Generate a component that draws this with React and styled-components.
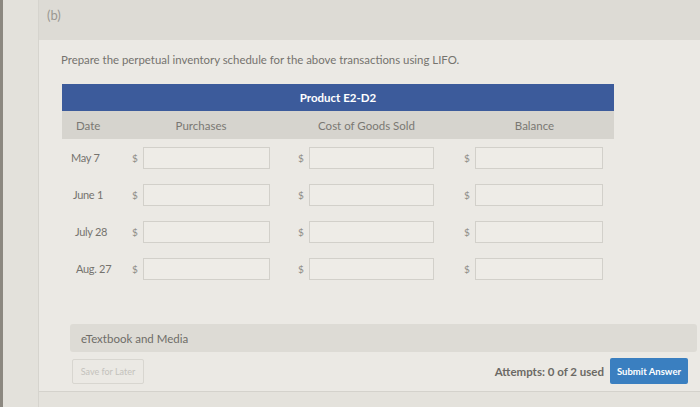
import React from "react";
import styled, { createGlobalStyle } from "styled-components";

const GlobalStyle = createGlobalStyle`
  html, body {
    margin: 0;
    padding: 0;
    background: #e4e2dc;
    font-family: Lato, "Open Sans", sans-serif;
  }
`;

const rows = [
  { date: "May 7", indent: 9 },
  { date: "June 1", indent: 11 },
  { date: "July 28", indent: 13 },
  { date: "Aug. 27", indent: 14 },
];

const App = () => {
  return (
    <>
      <GlobalStyle />
      <Page>
        <SideStrip />
        <Main>
          <PartHeader>(b)</PartHeader>
          <Card>
            <Prompt>
              Prepare the perpetual inventory schedule for the above
              transactions using LIFO.
            </Prompt>
            <Table>
              <TitleBar>Product E2-D2</TitleBar>
              <ColumnRow>
                <ColumnLabel $align="left">Date</ColumnLabel>
                <ColumnLabel>Purchases</ColumnLabel>
                <ColumnLabel $shift={16}>Cost of Goods Sold</ColumnLabel>
                <ColumnLabel $shift={14}>Balance</ColumnLabel>
              </ColumnRow>
              {rows.map((row) => (
                <EntryRow key={row.date}>
                  <DateCell $indent={row.indent}>{row.date}</DateCell>
                  <MoneyCell $pad={6}>
                    <Dollar>$</Dollar>
                    <Field $w={127} />
                  </MoneyCell>
                  <MoneyCell $pad={22}>
                    <Dollar>$</Dollar>
                    <Field $w={125} />
                  </MoneyCell>
                  <MoneyCell $pad={23}>
                    <Dollar>$</Dollar>
                    <Field $w={128} />
                  </MoneyCell>
                </EntryRow>
              ))}
            </Table>
            <MediaBar>eTextbook and Media</MediaBar>
            <Footer>
              <SaveButton>Save for Later</SaveButton>
              <FooterRight>
                <Attempts>Attempts: 0 of 2 used</Attempts>
                <SubmitButton>Submit Answer</SubmitButton>
              </FooterRight>
            </Footer>
          </Card>
        </Main>
      </Page>
    </>
  );
};

const Page = styled.div`
  display: flex;
  width: 700px;
  height: 407px;
  overflow: hidden;
  background: #e4e2dc;
`;

const SideStrip = styled.div`
  width: 35px;
  flex-shrink: 0;
  border-left: 3px solid #8c8880;
  background: #e3e1db;
  border-right: 1px solid #d6d4ce;
`;

const Main = styled.div`
  flex: 1;
  display: flex;
  flex-direction: column;
`;

const PartHeader = styled.div`
  height: 40px;
  box-sizing: border-box;
  padding: 7px 0 0 8px;
  background: #dddbd5;
  color: #9a9892;
  font-size: 13px;
`;

const Card = styled.div`
  height: 352px;
  box-sizing: border-box;
  background: #ebe9e4;
  border-bottom: 1px solid #d4d2cc;
  padding: 13px 0 0 22px;
`;

const Prompt = styled.div`
  font-size: 11.4px;
  color: #75736e;
  height: 31px;
`;

const Table = styled.div`
  width: 552px;
  margin-left: 1px;
`;

const TitleBar = styled.div`
  height: 27px;
  background: #3c5b9b;
  color: #ffffff;
  font-weight: 700;
  font-size: 11.5px;
  display: flex;
  align-items: center;
  justify-content: center;
`;

const grid = `
  display: grid;
  grid-template-columns: 64px 150px 165px 173px;
`;

const ColumnRow = styled.div`
  ${grid}
  height: 28px;
  background: #d6d4ce;
  align-items: center;
`;

const ColumnLabel = styled.div`
  font-size: 11.5px;
  color: #7a7873;
  text-align: ${(p) => p.$align || "center"};
  padding-left: ${(p) => (p.$align === "left" ? 14 : p.$shift || 0)}px;
`;

const EntryRow = styled.div`
  ${grid}
  height: 37px;
  align-items: center;
`;

const DateCell = styled.div`
  font-size: 11px;
  color: #75736e;
  padding-left: ${(p) => p.$indent}px;
  letter-spacing: -0.3px;
`;

const MoneyCell = styled.div`
  display: flex;
  align-items: center;
  padding-left: ${(p) => p.$pad}px;
`;

const Dollar = styled.span`
  width: 11px;
  font-size: 10px;
  color: #8d8b86;
`;

const Field = styled.div`
  width: ${(p) => p.$w}px;
  height: 22px;
  box-sizing: border-box;
  border: 1px solid #d2d0ca;
  background: #eeece7;
`;

const MediaBar = styled.div`
  margin: 37px 3px 0 9px;
  height: 28px;
  background: #dddbd5;
  border-radius: 3px;
  display: flex;
  align-items: center;
  padding-left: 11px;
  font-size: 11.5px;
  color: #6f6d68;
`;

const Footer = styled.div`
  display: flex;
  justify-content: space-between;
  align-items: center;
  margin: 6px 12px 0 11px;
`;

const SaveButton = styled.div`
  width: 72px;
  height: 25px;
  box-sizing: border-box;
  border: 1px solid #d8d6d0;
  border-radius: 2px;
  display: flex;
  align-items: center;
  justify-content: center;
  font-size: 9px;
  color: #c4c2bc;
`;

const FooterRight = styled.div`
  display: flex;
  align-items: center;
  gap: 6px;
`;

const Attempts = styled.span`
  font-size: 11.5px;
  font-weight: 700;
  color: #6b6964;
`;

const SubmitButton = styled.div`
  width: 78px;
  height: 26px;
  background: #3a7fc0;
  border-radius: 2px;
  color: #ffffff;
  font-weight: 700;
  font-size: 9.5px;
  display: flex;
  align-items: center;
  justify-content: center;
`;

export default App;
